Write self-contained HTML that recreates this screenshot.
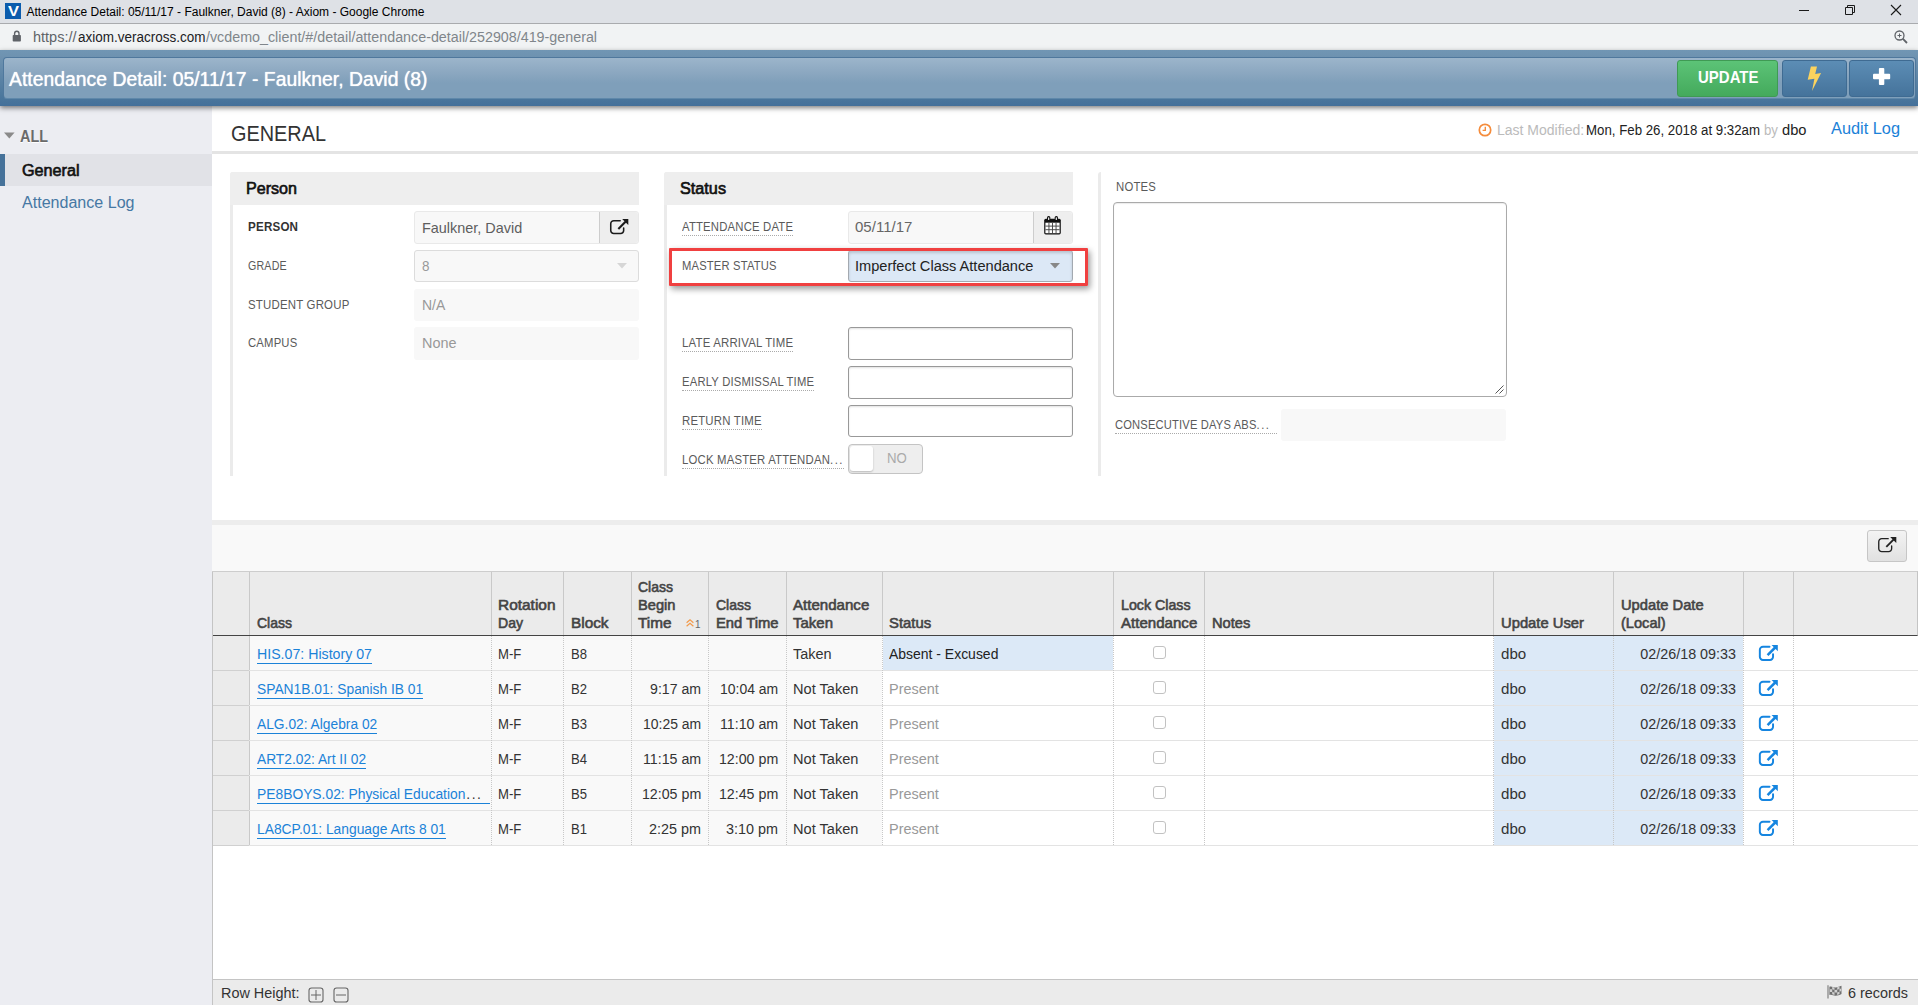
<!DOCTYPE html>
<html lang="en"><head><meta charset="utf-8"><title>Attendance Detail: 05/11/17 - Faulkner, David (8) - Axiom</title>
<style>
*{box-sizing:border-box;margin:0;padding:0}
html,body{width:1918px;height:1005px;overflow:hidden;background:#fff}
body{position:relative;font-family:"Liberation Sans",sans-serif;font-size:14px;color:#333}
.a{position:absolute}
.t{position:absolute;white-space:nowrap;line-height:20px;display:inline-block}
svg{position:absolute;overflow:visible}
.inp{position:absolute;height:32px;background:#f8f8f8;border-radius:3px}
.winp{position:absolute;height:32px;background:#fff;border:1px solid #999;border-radius:3px}
.vl{position:absolute;width:0;border-left:1px dotted #c8c8c8}
.hl{position:absolute;height:1px;background:#e6e6e6}
.hsep{position:absolute;width:1px;background:#c9c9c9}
.cb{position:absolute;width:13px;height:13px;border:1px solid #c2c2c2;border-radius:3px;background:#fff}
.du{border-bottom:1px dotted #aaa}
</style></head><body>
<div class="a" style="left:0;top:0;width:1918px;height:24px;background:#dee1e6;border-bottom:1px solid #a9abae"></div>
<div class="a" style="left:5px;top:3px;width:16px;height:16px;background:#0b5cad"></div>
<span class="t" style="top:1.00px;font-size:14.00px;color:#fff;font-weight:700;left:7.60px;transform:scaleX(1.1773);transform-origin:0 50%;">V</span>
<span class="t" style="top:2.00px;font-size:12.00px;color:#000;left:26.50px;">Attendance Detail: 05/11/17 - Faulkner, David (8) - Axiom - Google Chrome</span>
<svg style="left:1790px;top:0" width="128" height="24" viewBox="0 0 128 24"><g fill="none" stroke="#1a1a1a" stroke-width="1"><path d="M9 10.5h10"/><path d="M55.5 7.5h7v7h-7z" /><path d="M57.5 7.5v-2h7v7h-2"/><path d="M101 5l10 10M111 5l-10 10" stroke-width="1.1"/></g></svg>
<div class="a" style="left:0;top:24px;width:1918px;height:26px;background:#f1f3f4"></div>
<svg style="left:12px;top:30px" width="10" height="12" viewBox="0 0 10 12"><rect x="0.7" y="5" width="8.2" height="6.6" rx="0.8" fill="#5f6368"/><path d="M2.6 5V3.4a2.2 2.2 0 0 1 4.4 0V5" fill="none" stroke="#5f6368" stroke-width="1.4"/></svg>
<span class="t" style="top:27.00px;font-size:14.00px;color:#5f6368;left:33.20px;transform:scaleX(1.0349);transform-origin:0 50%;">https://</span>
<span class="t" style="top:27.00px;font-size:14.00px;color:#202124;left:78.30px;transform:scaleX(0.9640);transform-origin:0 50%;">axiom.veracross.com</span>
<span class="t" style="top:27.00px;font-size:14.00px;color:#80868b;left:206.30px;transform:scaleX(1.0211);transform-origin:0 50%;">/vcdemo_client/#/detail/attendance-detail/252908/419-general</span>
<svg style="left:1894.2px;top:30.3px" width="14" height="14" viewBox="0 0 14 14"><g fill="none" stroke="#5f6368" stroke-width="1.3"><circle cx="5.5" cy="5.5" r="4.5"/><path d="M8.7 8.7l4.3 4.3" stroke-width="1.8"/><path d="M3.5 5.5h4M5.5 3.5v4" stroke-width="1"/></g></svg>
<div class="a" style="left:0;top:0;width:1918px;height:0;z-index:3">
<div class="a" style="left:0;top:50px;width:1918px;height:56px;background:linear-gradient(#7196b4,#6e92b0 12%,#4a769c 86%,#44709a);box-shadow:0 2px 5px rgba(0,0,0,.5)"></div>
<div class="a" style="left:3px;top:57px;width:1913px;height:42px;border-radius:4px;background:linear-gradient(#9cb5cb,#8ba7c0 38%,#7f9fba 62%,#7f9fba);border:1px solid #4f789d;border-bottom-color:#5f88aa"></div>
<span class="t" style="top:69.00px;font-size:19.60px;color:#fff;left:8.80px;transform:scaleX(0.9886);transform-origin:0 50%;text-shadow:0 0 1px #fff;">Attendance Detail: 05/11/17 - Faulkner, David (8)</span>
<div class="a" style="left:1677px;top:60px;width:101px;height:37px;border-radius:3px;background:linear-gradient(#5cc377,#44aa5c);border:1px solid #3f9a54"></div>
<span class="t" style="top:67.00px;font-size:16.20px;color:#fff;font-weight:700;left:1697.50px;transform:scaleX(0.9257);transform-origin:0 50%;">UPDATE</span>
<div class="a" style="left:1782px;top:60px;width:65px;height:37px;border-radius:3px;background:linear-gradient(#5c8db5,#45739b);border:1px solid #3f6b92"></div>
<div class="a" style="left:1849px;top:60px;width:65px;height:37px;border-radius:3px;background:linear-gradient(#5c8db5,#45739b);border:1px solid #3f6b92"></div>
<svg style="left:1806px;top:66px" width="16" height="26" viewBox="0 0 16 26"><path d="M4.900 0.600L11 0.600L9.200 8L15.100 7.100L6 25.100L8.400 12.800L1.700 13.700Z" fill="#fbd35e"/></svg>
<svg style="left:1872.9px;top:68.1px" width="17.2" height="17" viewBox="0 0 17.2 17"><rect x="5.900" y="0" width="5.400" height="17" rx="1" fill="#fff"/><rect x="0" y="5.800" width="17.200" height="5.400" rx="1" fill="#fff"/></svg>
</div>
<div class="a" style="left:0;top:106px;width:212px;height:899px;background:#ecedf2"></div>
<svg style="left:4px;top:132px" width="11" height="7" viewBox="0 0 11 7"><path d="M0 0.4h10.6L5.3 6.6z" fill="#8a8a8a"/></svg>
<span class="t" style="top:127.00px;font-size:15.60px;color:#6a6a6a;font-weight:700;left:20.00px;transform:scaleX(0.9237);transform-origin:0 50%;text-shadow:0 1px 0 #fff;">ALL</span>
<div class="a" style="left:0;top:154px;width:212px;height:32px;background:#e1e2e7;border-left:5px solid #46729a"></div>
<span class="t" style="top:161.00px;font-size:15.80px;color:#111;-webkit-text-stroke:0.63px #111;left:22.00px;transform:scaleX(1.0231);transform-origin:0 50%;">General</span>
<span class="t" style="top:193.00px;font-size:15.80px;color:#4678a4;left:22.00px;transform:scaleX(1.0165);transform-origin:0 50%;">Attendance Log</span>
<span class="t" style="top:124.00px;font-size:22.30px;color:#333;left:231.00px;transform:scaleX(0.8914);transform-origin:0 50%;">GENERAL</span>
<div class="a" style="left:212px;top:151px;width:1706px;height:3px;background:#e4e4e4"></div>
<svg style="left:1477.6px;top:122.9px" width="14" height="14" viewBox="0 0 14 14"><circle cx="7" cy="7" r="5.7" fill="none" stroke="#f58c3c" stroke-width="1.7"/><path d="M7.3 3.8v3.6H4.6" fill="none" stroke="#f58c3c" stroke-width="1.4"/></svg>
<span class="t" style="top:121.00px;font-size:13.80px;color:#bbb;left:1496.70px;transform:scaleX(1.0151);transform-origin:0 50%;">Last Modified:</span>
<span class="t" style="top:121.00px;font-size:13.80px;color:#222;left:1586.00px;transform:scaleX(0.9612);transform-origin:0 50%;">Mon, Feb 26, 2018 at 9:32am</span>
<span class="t" style="top:121.00px;font-size:13.80px;color:#bbb;left:1763.50px;transform:scaleX(0.9603);transform-origin:0 50%;">by</span>
<span class="t" style="top:121.00px;font-size:13.80px;color:#222;left:1781.50px;transform:scaleX(1.0638);transform-origin:0 50%;">dbo</span>
<span class="t" style="top:119.00px;font-size:16.60px;color:#1b82d8;left:1831.00px;transform:scaleX(0.9840);transform-origin:0 50%;">Audit Log</span>
<div class="a" style="left:230px;top:172px;width:3px;height:304px;background:#ebebeb;border-radius:3px 0 0 0"></div>
<div class="a" style="left:230px;top:172px;width:409px;height:33px;background:#eee;border-radius:3px 0 0 0"></div>
<span class="t" style="top:179.00px;font-size:15.80px;color:#111;-webkit-text-stroke:0.63px #111;left:245.50px;transform:scaleX(1.0187);transform-origin:0 50%;">Person</span>
<div class="a" style="left:664px;top:172px;width:3px;height:304px;background:#ebebeb;border-radius:3px 0 0 0"></div>
<div class="a" style="left:664px;top:172px;width:409px;height:33px;background:#eee;border-radius:3px 0 0 0"></div>
<span class="t" style="top:179.00px;font-size:15.80px;color:#111;-webkit-text-stroke:0.63px #111;left:679.50px;transform:scaleX(1.0269);transform-origin:0 50%;">Status</span>
<div class="a" style="left:1098px;top:172px;width:3px;height:304px;background:#ebebeb;border-radius:3px 0 0 0"></div>
<span class="t" style="top:217.00px;font-size:12.20px;color:#333;font-weight:700;left:248.20px;transform:scaleX(0.9531);transform-origin:0 50%;letter-spacing:0.2px;">PERSON</span>
<span class="t" style="top:256.00px;font-size:12.20px;color:#5a5a5a;left:248.20px;transform:scaleX(0.8750);transform-origin:0 50%;letter-spacing:0.2px;">GRADE</span>
<span class="t" style="top:295.00px;font-size:12.20px;color:#5a5a5a;left:248.20px;transform:scaleX(0.9397);transform-origin:0 50%;letter-spacing:0.2px;">STUDENT GROUP</span>
<span class="t" style="top:333.00px;font-size:12.20px;color:#5a5a5a;left:248.20px;transform:scaleX(0.9261);transform-origin:0 50%;letter-spacing:0.2px;">CAMPUS</span>
<div class="inp" style="left:414px;top:211px;width:225px;height:33px;border:1px solid #e9e9e9"></div>
<div class="a" style="left:599px;top:212px;width:39px;height:31px;background:#eee;border-left:1px solid #cdcdcd;border-radius:0 3px 3px 0"></div>
<svg style="left:609.8px;top:218.8px" width="19.0" height="16.0" viewBox="0 0 19 16"><path d="M10.2 1.65H3.75a3 3 0 0 0-3 3V11.55a3 3 0 0 0 3 3H10.65a3 3 0 0 0 3-3V8.9" fill="none" stroke="#1a1a1a" stroke-width="1.55" stroke-linecap="round"/><path d="M8.3 9.9L16 2.2" fill="none" stroke="#1a1a1a" stroke-width="2.10"/><path d="M12.2 0H18.3V6.1z" fill="#1a1a1a"/></svg>
<span class="t" style="top:218.00px;font-size:14.60px;color:#5e5e5e;left:421.90px;transform:scaleX(0.9881);transform-origin:0 50%;">Faulkner, David</span>
<div class="inp" style="left:414px;top:250px;width:225px;border:1px solid #dcdcdc"></div>
<span class="t" style="top:256.00px;font-size:14.60px;color:#999;left:421.90px;transform:scaleX(0.9231);transform-origin:0 50%;">8</span>
<svg style="left:616.7px;top:263px" width="10" height="6" viewBox="0 0 10 6"><path d="M0 0h10L5 5.4z" fill="#d6d6d6"/></svg>
<div class="inp" style="left:414px;top:289px;width:225px"></div>
<span class="t" style="top:295.00px;font-size:14.60px;color:#999;left:421.70px;transform:scaleX(0.9577);transform-origin:0 50%;">N/A</span>
<div class="inp" style="left:414px;top:327px;width:225px;height:33px"></div>
<span class="t" style="top:333.00px;font-size:14.60px;color:#999;left:421.90px;transform:scaleX(0.9888);transform-origin:0 50%;">None</span>
<div class="a" style="left:681.8px;top:235.0px;width:111.2px;height:0;border-top:1px dotted #aaa"></div>
<span class="t" style="top:217.00px;font-size:12.20px;color:#5a5a5a;left:681.80px;transform:scaleX(0.9290);transform-origin:0 50%;letter-spacing:0.2px;">ATTENDANCE DATE</span>
<span class="t" style="top:256.00px;font-size:12.20px;color:#5a5a5a;left:681.80px;transform:scaleX(0.9190);transform-origin:0 50%;letter-spacing:0.2px;">MASTER STATUS</span>
<div class="a" style="left:681.8px;top:351.0px;width:111.2px;height:0;border-top:1px dotted #aaa"></div>
<span class="t" style="top:333.00px;font-size:12.20px;color:#5a5a5a;left:681.80px;transform:scaleX(0.9363);transform-origin:0 50%;letter-spacing:0.2px;">LATE ARRIVAL TIME</span>
<div class="a" style="left:681.8px;top:390.0px;width:132.2px;height:0;border-top:1px dotted #aaa"></div>
<span class="t" style="top:372.00px;font-size:12.20px;color:#5a5a5a;left:681.80px;transform:scaleX(0.9240);transform-origin:0 50%;letter-spacing:0.2px;">EARLY DISMISSAL TIME</span>
<div class="a" style="left:681.8px;top:429.0px;width:79.8px;height:0;border-top:1px dotted #aaa"></div>
<span class="t" style="top:411.00px;font-size:12.20px;color:#5a5a5a;left:681.80px;transform:scaleX(0.9359);transform-origin:0 50%;letter-spacing:0.2px;">RETURN TIME</span>
<div class="a" style="left:681.8px;top:468.0px;width:162.0px;height:0;border-top:1px dotted #aaa"></div>
<span class="t" style="top:450.00px;font-size:12.20px;color:#5a5a5a;left:681.80px;transform:scaleX(0.9320);transform-origin:0 50%;letter-spacing:0.2px;">LOCK MASTER ATTENDAN<span style="letter-spacing:1.6px">...</span></span>
<div class="inp" style="left:848px;top:211px;width:225px;height:33px;border:1px solid #e9e9e9"></div>
<div class="a" style="left:1033px;top:212px;width:39px;height:31px;background:#eee;border-left:1px solid #cdcdcd;border-radius:0 3px 3px 0"></div>
<span class="t" style="top:217.00px;font-size:14.60px;color:#666;left:855.30px;transform:scaleX(1.0317);transform-origin:0 50%;">05/11/17</span>
<svg style="left:1044.4px;top:216.3px" width="17" height="18.6" viewBox="0 0 17 18.6"><rect x="0.2" y="2.7" width="16.6" height="15.7" rx="1.6" fill="#111"/><rect x="1.4" y="6.7" width="14.2" height="10.5" fill="#fff"/><path d="M4.95 6.7v10.5M8.5 6.700v10.5M12.050 6.700v10.5M1.400 10.100h14.2M1.400 13.700h14.2" stroke="#444" stroke-width=".95" fill="none"/><rect x="3" y="0.100" width="3.300" height="5" rx="1.500" fill="#111"/><rect x="10.700" y="0.100" width="3.300" height="5" rx="1.500" fill="#111"/><rect x="4" y="1.200" width="1.300" height="2.900" rx=".600" fill="#ddd"/><rect x="11.700" y="1.200" width="1.300" height="2.900" rx=".600" fill="#ddd"/></svg>
<div class="a" style="left:848px;top:250px;width:225px;height:32px;background:#dce8f6;border:1px solid #a3a9b0;border-radius:3px;box-shadow:inset 0 2px 3px rgba(0,0,0,.16)"></div>
<div class="a" style="left:669px;top:248px;width:419px;height:38px;border:3px solid #f04040;border-radius:1px;box-shadow:2px 3px 6px rgba(0,0,0,.4)"></div>
<span class="t" style="top:256.00px;font-size:15.10px;color:#222;left:855.30px;transform:scaleX(0.9665);transform-origin:0 50%;">Imperfect Class Attendance</span>
<svg style="left:1050.4px;top:263px" width="10" height="6" viewBox="0 0 10 6"><path d="M0 0h10L5 5.4z" fill="#888"/></svg>
<div class="winp" style="left:848px;top:327px;width:225px;height:33px;box-shadow:inset 0 1px 2px rgba(0,0,0,.12)"></div>
<div class="winp" style="left:848px;top:366px;width:225px;height:33px;box-shadow:inset 0 1px 2px rgba(0,0,0,.12)"></div>
<div class="winp" style="left:848px;top:405px;width:225px;height:32px;box-shadow:inset 0 1px 2px rgba(0,0,0,.12)"></div>
<div class="a" style="left:848px;top:444px;width:75px;height:30px;background:#eee;border:1px solid #c4c4c4;border-radius:4px"></div>
<div class="a" style="left:850px;top:446px;width:23px;height:25px;background:#fff;border-radius:3px;box-shadow:0 1px 2px rgba(0,0,0,.22)"></div>
<span class="t" style="top:448.00px;font-size:14.40px;color:#aaa;left:887.30px;transform:scaleX(0.9169);transform-origin:0 50%;">NO</span>
<span class="t" style="top:177.00px;font-size:12.20px;color:#5a5a5a;left:1115.50px;transform:scaleX(0.9306);transform-origin:0 50%;letter-spacing:0.2px;">NOTES</span>
<div class="a" style="left:1113px;top:202px;width:394px;height:195px;background:#fff;border:1px solid #aaa;border-radius:4px;box-shadow:inset 0 1px 1px rgba(0,0,0,.08)"></div>
<svg style="left:1495px;top:385px" width="9" height="9" viewBox="0 0 9 9"><path d="M0.5 8.5l8-8M4.5 8.5l4-4" stroke="#555" stroke-width="1" fill="none"/></svg>
<div class="a" style="left:1115.3px;top:433.0px;width:162.0px;height:0;border-top:1px dotted #aaa"></div>
<span class="t" style="top:415.00px;font-size:12.20px;color:#5a5a5a;left:1115.30px;transform:scaleX(0.9147);transform-origin:0 50%;letter-spacing:0.2px;">CONSECUTIVE DAYS ABS<span style="letter-spacing:1.6px">...</span></span>
<div class="inp" style="left:1281px;top:409px;width:225px"></div>
<div class="a" style="left:212px;top:520px;width:1706px;height:5px;background:#ededed"></div>
<div class="a" style="left:212px;top:525px;width:1706px;height:47px;background:#f9f9f9"></div>
<div class="a" style="left:1867px;top:530px;width:40px;height:32px;background:linear-gradient(#f3f3f3,#e1e1e1);border:1px solid #c6c6c6;border-radius:3px"></div>
<svg style="left:1877.6px;top:537.4px" width="19.0" height="16.0" viewBox="0 0 19 16"><path d="M10.2 1.65H3.75a3 3 0 0 0-3 3V11.55a3 3 0 0 0 3 3H10.65a3 3 0 0 0 3-3V8.9" fill="none" stroke="#222" stroke-width="1.35" stroke-linecap="round"/><path d="M8.3 9.9L16 2.2" fill="none" stroke="#222" stroke-width="1.90"/><path d="M12.2 0H18.3V6.1z" fill="#222"/></svg>
<div class="a" style="left:212px;top:571px;width:1706px;height:65px;background:#ebebeb;border-top:1px solid #cdcdcd;border-bottom:1px solid #444;border-right:1px solid #c4c4c4"></div>
<div class="hsep" style="left:249px;top:572px;height:63px"></div>
<div class="hsep" style="left:491px;top:572px;height:63px"></div>
<div class="hsep" style="left:563px;top:572px;height:63px"></div>
<div class="hsep" style="left:631px;top:572px;height:63px"></div>
<div class="hsep" style="left:708px;top:572px;height:63px"></div>
<div class="hsep" style="left:786px;top:572px;height:63px"></div>
<div class="hsep" style="left:882px;top:572px;height:63px"></div>
<div class="hsep" style="left:1113px;top:572px;height:63px"></div>
<div class="hsep" style="left:1204px;top:572px;height:63px"></div>
<div class="hsep" style="left:1493px;top:572px;height:63px"></div>
<div class="hsep" style="left:1613px;top:572px;height:63px"></div>
<div class="hsep" style="left:1743px;top:572px;height:63px"></div>
<div class="hsep" style="left:1793px;top:572px;height:63px"></div>
<div class="a" style="left:212px;top:636px;width:38px;height:210px;background:#ebebeb;border-right:1px solid #c9c9c9"></div>
<div class="a" style="left:250px;top:636px;width:632px;height:209px;background:#f9f9f9"></div>
<div class="a" style="left:883px;top:636px;width:230px;height:34px;background:#dce9f7"></div>
<div class="a" style="left:1494px;top:636px;width:249px;height:209px;background:#dce9f7"></div>
<div class="hl" style="left:212px;top:670px;width:1706px;background:#e3e3e3"></div>
<div class="hl" style="left:212px;top:705px;width:1706px;background:#e3e3e3"></div>
<div class="hl" style="left:212px;top:740px;width:1706px;background:#e3e3e3"></div>
<div class="hl" style="left:212px;top:775px;width:1706px;background:#e3e3e3"></div>
<div class="hl" style="left:212px;top:810px;width:1706px;background:#e3e3e3"></div>
<div class="hl" style="left:212px;top:845px;width:1706px;background:#e3e3e3"></div>
<div class="hl" style="left:213px;top:670px;width:36px;background:#d0d0d0"></div>
<div class="hl" style="left:213px;top:705px;width:36px;background:#d0d0d0"></div>
<div class="hl" style="left:213px;top:740px;width:36px;background:#d0d0d0"></div>
<div class="hl" style="left:213px;top:775px;width:36px;background:#d0d0d0"></div>
<div class="hl" style="left:213px;top:810px;width:36px;background:#d0d0d0"></div>
<div class="hl" style="left:213px;top:845px;width:36px;background:#d0d0d0"></div>
<div class="vl" style="left:491px;top:636px;height:209px"></div>
<div class="vl" style="left:563px;top:636px;height:209px"></div>
<div class="vl" style="left:631px;top:636px;height:209px"></div>
<div class="vl" style="left:708px;top:636px;height:209px"></div>
<div class="vl" style="left:786px;top:636px;height:209px"></div>
<div class="vl" style="left:882px;top:636px;height:209px"></div>
<div class="vl" style="left:1113px;top:636px;height:209px"></div>
<div class="vl" style="left:1204px;top:636px;height:209px"></div>
<div class="vl" style="left:1493px;top:636px;height:209px"></div>
<div class="vl" style="left:1613px;top:636px;height:209px"></div>
<div class="vl" style="left:1743px;top:636px;height:209px"></div>
<div class="vl" style="left:1793px;top:636px;height:209px"></div>
<div class="a" style="left:212px;top:572px;width:1px;height:433px;background:#c4c4c4"></div>
<span class="t" style="top:613.00px;font-size:14.40px;color:#444;-webkit-text-stroke:0.58px #444;left:256.90px;transform:scaleX(0.9726);transform-origin:0 50%;">Class</span>
<span class="t" style="top:595.00px;font-size:14.40px;color:#444;-webkit-text-stroke:0.58px #444;left:498.20px;transform:scaleX(1.0726);transform-origin:0 50%;">Rotation</span>
<span class="t" style="top:613.00px;font-size:14.40px;color:#444;-webkit-text-stroke:0.58px #444;left:498.20px;transform:scaleX(0.9768);transform-origin:0 50%;">Day</span>
<span class="t" style="top:613.00px;font-size:14.40px;color:#444;-webkit-text-stroke:0.58px #444;left:571.00px;transform:scaleX(1.0652);transform-origin:0 50%;">Block</span>
<span class="t" style="top:577.00px;font-size:14.40px;color:#444;-webkit-text-stroke:0.58px #444;left:638.20px;transform:scaleX(0.9726);transform-origin:0 50%;">Class</span>
<span class="t" style="top:595.00px;font-size:14.40px;color:#444;-webkit-text-stroke:0.58px #444;left:638.20px;transform:scaleX(1.0187);transform-origin:0 50%;">Begin</span>
<span class="t" style="top:613.00px;font-size:14.40px;color:#444;-webkit-text-stroke:0.58px #444;left:638.20px;transform:scaleX(1.0651);transform-origin:0 50%;">Time</span>
<span class="t" style="top:595.00px;font-size:14.40px;color:#444;-webkit-text-stroke:0.58px #444;left:715.60px;transform:scaleX(0.9726);transform-origin:0 50%;">Class</span>
<span class="t" style="top:613.00px;font-size:14.40px;color:#444;-webkit-text-stroke:0.58px #444;left:715.60px;transform:scaleX(1.0280);transform-origin:0 50%;">End Time</span>
<span class="t" style="top:595.00px;font-size:14.40px;color:#444;-webkit-text-stroke:0.58px #444;left:792.90px;transform:scaleX(1.0479);transform-origin:0 50%;">Attendance</span>
<span class="t" style="top:613.00px;font-size:14.40px;color:#444;-webkit-text-stroke:0.58px #444;left:792.90px;transform:scaleX(1.0415);transform-origin:0 50%;">Taken</span>
<span class="t" style="top:613.00px;font-size:14.40px;color:#444;-webkit-text-stroke:0.58px #444;left:889.30px;transform:scaleX(1.0340);transform-origin:0 50%;">Status</span>
<span class="t" style="top:595.00px;font-size:14.40px;color:#444;-webkit-text-stroke:0.58px #444;left:1120.50px;transform:scaleX(0.9873);transform-origin:0 50%;">Lock Class</span>
<span class="t" style="top:613.00px;font-size:14.40px;color:#444;-webkit-text-stroke:0.58px #444;left:1120.50px;transform:scaleX(1.0479);transform-origin:0 50%;">Attendance</span>
<span class="t" style="top:613.00px;font-size:14.40px;color:#444;-webkit-text-stroke:0.58px #444;left:1211.80px;transform:scaleX(1.0188);transform-origin:0 50%;">Notes</span>
<span class="t" style="top:613.00px;font-size:14.40px;color:#444;-webkit-text-stroke:0.58px #444;left:1500.80px;transform:scaleX(1.0273);transform-origin:0 50%;">Update User</span>
<span class="t" style="top:595.00px;font-size:14.40px;color:#444;-webkit-text-stroke:0.58px #444;left:1621.00px;transform:scaleX(1.0221);transform-origin:0 50%;">Update Date</span>
<span class="t" style="top:613.00px;font-size:14.40px;color:#444;-webkit-text-stroke:0.58px #444;left:1621.00px;transform:scaleX(1.0136);transform-origin:0 50%;">(Local)</span>
<svg style="left:686px;top:618.5px" width="8" height="8" viewBox="0 0 8 8"><path d="M0.6 3.8L4 0.8l3.4 3M0.6 7.2L4 4.2l3.4 3" fill="none" stroke="#f29b4c" stroke-width="1.2"/></svg>
<span class="t" style="top:614.00px;font-size:11.00px;color:#666;left:694.50px;transform:scaleX(0.8980);transform-origin:0 50%;">1</span>
<span class="t" style="top:644.00px;font-size:14.70px;color:#1b82d8;left:256.90px;transform:scaleX(0.9649);transform-origin:0 50%;">HIS.07: History 07</span>
<div class="a" style="left:256.9px;top:662.6px;width:115.0px;height:1px;background:#1b82d8"></div>
<span class="t" style="top:644.00px;font-size:14.70px;color:#333;left:498.20px;transform:scaleX(0.8924);transform-origin:0 50%;">M-F</span>
<span class="t" style="top:644.00px;font-size:14.70px;color:#333;left:571.00px;transform:scaleX(0.8904);transform-origin:0 50%;">B8</span>
<span class="t" style="top:644.00px;font-size:14.70px;color:#333;left:792.90px;transform:scaleX(0.9846);transform-origin:0 50%;">Taken</span>
<span class="t" style="top:644.00px;font-size:14.70px;color:#222;left:889.30px;transform:scaleX(0.9503);transform-origin:0 50%;">Absent - Excused</span>
<div class="cb" style="left:1152.5px;top:646.0px"></div>
<span class="t" style="top:644.00px;font-size:14.70px;color:#333;left:1500.80px;transform:scaleX(1.0279);transform-origin:0 50%;">dbo</span>
<span class="t" style="top:644.00px;font-size:14.70px;color:#333;right:181.80px;transform:scaleX(0.9764);transform-origin:100% 50%;">02/26/18 09:33</span>
<svg style="left:1758.8px;top:645.0px" width="19.6" height="16.4" viewBox="0 0 19 16"><path d="M10.2 1.65H3.75a3 3 0 0 0-3 3V11.55a3 3 0 0 0 3 3H10.65a3 3 0 0 0 3-3V8.9" fill="none" stroke="#1585e0" stroke-width="1.90" stroke-linecap="round"/><path d="M8.3 9.9L16 2.2" fill="none" stroke="#1585e0" stroke-width="2.45"/><path d="M12.2 0H18.3V6.1z" fill="#1585e0"/></svg>
<span class="t" style="top:679.00px;font-size:14.70px;color:#1b82d8;left:256.90px;transform:scaleX(0.9395);transform-origin:0 50%;">SPAN1B.01: Spanish IB 01</span>
<div class="a" style="left:256.9px;top:697.6px;width:166.2px;height:1px;background:#1b82d8"></div>
<span class="t" style="top:679.00px;font-size:14.70px;color:#333;left:498.20px;transform:scaleX(0.8924);transform-origin:0 50%;">M-F</span>
<span class="t" style="top:679.00px;font-size:14.70px;color:#333;left:571.00px;transform:scaleX(0.8904);transform-origin:0 50%;">B2</span>
<span class="t" style="top:679.00px;font-size:14.70px;color:#333;right:1217.00px;transform:scaleX(0.9608);transform-origin:100% 50%;">9:17 am</span>
<span class="t" style="top:679.00px;font-size:14.70px;color:#333;right:1139.50px;transform:scaleX(0.9502);transform-origin:100% 50%;">10:04 am</span>
<span class="t" style="top:679.00px;font-size:14.70px;color:#333;left:792.90px;transform:scaleX(0.9928);transform-origin:0 50%;">Not Taken</span>
<span class="t" style="top:679.00px;font-size:14.70px;color:#999;left:889.30px;transform:scaleX(0.9837);transform-origin:0 50%;">Present</span>
<div class="cb" style="left:1152.5px;top:681.0px"></div>
<span class="t" style="top:679.00px;font-size:14.70px;color:#333;left:1500.80px;transform:scaleX(1.0279);transform-origin:0 50%;">dbo</span>
<span class="t" style="top:679.00px;font-size:14.70px;color:#333;right:181.80px;transform:scaleX(0.9764);transform-origin:100% 50%;">02/26/18 09:33</span>
<svg style="left:1758.8px;top:680.0px" width="19.6" height="16.4" viewBox="0 0 19 16"><path d="M10.2 1.65H3.75a3 3 0 0 0-3 3V11.55a3 3 0 0 0 3 3H10.65a3 3 0 0 0 3-3V8.9" fill="none" stroke="#1585e0" stroke-width="1.90" stroke-linecap="round"/><path d="M8.3 9.9L16 2.2" fill="none" stroke="#1585e0" stroke-width="2.45"/><path d="M12.2 0H18.3V6.1z" fill="#1585e0"/></svg>
<span class="t" style="top:714.00px;font-size:14.70px;color:#1b82d8;left:256.90px;transform:scaleX(0.9376);transform-origin:0 50%;">ALG.02: Algebra 02</span>
<div class="a" style="left:256.9px;top:732.6px;width:120.2px;height:1px;background:#1b82d8"></div>
<span class="t" style="top:714.00px;font-size:14.70px;color:#333;left:498.20px;transform:scaleX(0.8924);transform-origin:0 50%;">M-F</span>
<span class="t" style="top:714.00px;font-size:14.70px;color:#333;left:571.00px;transform:scaleX(0.8904);transform-origin:0 50%;">B3</span>
<span class="t" style="top:714.00px;font-size:14.70px;color:#333;right:1217.00px;transform:scaleX(0.9502);transform-origin:100% 50%;">10:25 am</span>
<span class="t" style="top:714.00px;font-size:14.70px;color:#333;right:1139.50px;transform:scaleX(0.9675);transform-origin:100% 50%;">11:10 am</span>
<span class="t" style="top:714.00px;font-size:14.70px;color:#333;left:792.90px;transform:scaleX(0.9928);transform-origin:0 50%;">Not Taken</span>
<span class="t" style="top:714.00px;font-size:14.70px;color:#999;left:889.30px;transform:scaleX(0.9837);transform-origin:0 50%;">Present</span>
<div class="cb" style="left:1152.5px;top:716.0px"></div>
<span class="t" style="top:714.00px;font-size:14.70px;color:#333;left:1500.80px;transform:scaleX(1.0279);transform-origin:0 50%;">dbo</span>
<span class="t" style="top:714.00px;font-size:14.70px;color:#333;right:181.80px;transform:scaleX(0.9764);transform-origin:100% 50%;">02/26/18 09:33</span>
<svg style="left:1758.8px;top:715.0px" width="19.6" height="16.4" viewBox="0 0 19 16"><path d="M10.2 1.65H3.75a3 3 0 0 0-3 3V11.55a3 3 0 0 0 3 3H10.65a3 3 0 0 0 3-3V8.9" fill="none" stroke="#1585e0" stroke-width="1.90" stroke-linecap="round"/><path d="M8.3 9.9L16 2.2" fill="none" stroke="#1585e0" stroke-width="2.45"/><path d="M12.2 0H18.3V6.1z" fill="#1585e0"/></svg>
<span class="t" style="top:749.00px;font-size:14.70px;color:#1b82d8;left:256.90px;transform:scaleX(0.9366);transform-origin:0 50%;">ART2.02: Art II 02</span>
<div class="a" style="left:256.9px;top:767.6px;width:109.1px;height:1px;background:#1b82d8"></div>
<span class="t" style="top:749.00px;font-size:14.70px;color:#333;left:498.20px;transform:scaleX(0.8924);transform-origin:0 50%;">M-F</span>
<span class="t" style="top:749.00px;font-size:14.70px;color:#333;left:571.00px;transform:scaleX(0.8904);transform-origin:0 50%;">B4</span>
<span class="t" style="top:749.00px;font-size:14.70px;color:#333;right:1217.00px;transform:scaleX(0.9675);transform-origin:100% 50%;">11:15 am</span>
<span class="t" style="top:749.00px;font-size:14.70px;color:#333;right:1139.50px;transform:scaleX(0.9682);transform-origin:100% 50%;">12:00 pm</span>
<span class="t" style="top:749.00px;font-size:14.70px;color:#333;left:792.90px;transform:scaleX(0.9928);transform-origin:0 50%;">Not Taken</span>
<span class="t" style="top:749.00px;font-size:14.70px;color:#999;left:889.30px;transform:scaleX(0.9837);transform-origin:0 50%;">Present</span>
<div class="cb" style="left:1152.5px;top:751.0px"></div>
<span class="t" style="top:749.00px;font-size:14.70px;color:#333;left:1500.80px;transform:scaleX(1.0279);transform-origin:0 50%;">dbo</span>
<span class="t" style="top:749.00px;font-size:14.70px;color:#333;right:181.80px;transform:scaleX(0.9764);transform-origin:100% 50%;">02/26/18 09:33</span>
<svg style="left:1758.8px;top:750.0px" width="19.6" height="16.4" viewBox="0 0 19 16"><path d="M10.2 1.65H3.75a3 3 0 0 0-3 3V11.55a3 3 0 0 0 3 3H10.65a3 3 0 0 0 3-3V8.9" fill="none" stroke="#1585e0" stroke-width="1.90" stroke-linecap="round"/><path d="M8.3 9.9L16 2.2" fill="none" stroke="#1585e0" stroke-width="2.45"/><path d="M12.2 0H18.3V6.1z" fill="#1585e0"/></svg>
<span class="t" style="top:784.00px;font-size:14.70px;color:#1b82d8;left:256.90px;transform:scaleX(0.9419);transform-origin:0 50%;">PE8BOYS.02: Physical Education<span style="color:#333;letter-spacing:1.6px;margin-left:1px">...</span></span>
<div class="a" style="left:256.9px;top:802.6px;width:232.7px;height:1px;background:#1b82d8"></div>
<span class="t" style="top:784.00px;font-size:14.70px;color:#333;left:498.20px;transform:scaleX(0.8924);transform-origin:0 50%;">M-F</span>
<span class="t" style="top:784.00px;font-size:14.70px;color:#333;left:571.00px;transform:scaleX(0.8904);transform-origin:0 50%;">B5</span>
<span class="t" style="top:784.00px;font-size:14.70px;color:#333;right:1217.00px;transform:scaleX(0.9682);transform-origin:100% 50%;">12:05 pm</span>
<span class="t" style="top:784.00px;font-size:14.70px;color:#333;right:1139.50px;transform:scaleX(0.9682);transform-origin:100% 50%;">12:45 pm</span>
<span class="t" style="top:784.00px;font-size:14.70px;color:#333;left:792.90px;transform:scaleX(0.9928);transform-origin:0 50%;">Not Taken</span>
<span class="t" style="top:784.00px;font-size:14.70px;color:#999;left:889.30px;transform:scaleX(0.9837);transform-origin:0 50%;">Present</span>
<div class="cb" style="left:1152.5px;top:786.0px"></div>
<span class="t" style="top:784.00px;font-size:14.70px;color:#333;left:1500.80px;transform:scaleX(1.0279);transform-origin:0 50%;">dbo</span>
<span class="t" style="top:784.00px;font-size:14.70px;color:#333;right:181.80px;transform:scaleX(0.9764);transform-origin:100% 50%;">02/26/18 09:33</span>
<svg style="left:1758.8px;top:785.0px" width="19.6" height="16.4" viewBox="0 0 19 16"><path d="M10.2 1.65H3.75a3 3 0 0 0-3 3V11.55a3 3 0 0 0 3 3H10.65a3 3 0 0 0 3-3V8.9" fill="none" stroke="#1585e0" stroke-width="1.90" stroke-linecap="round"/><path d="M8.3 9.9L16 2.2" fill="none" stroke="#1585e0" stroke-width="2.45"/><path d="M12.2 0H18.3V6.1z" fill="#1585e0"/></svg>
<span class="t" style="top:819.00px;font-size:14.70px;color:#1b82d8;left:256.90px;transform:scaleX(0.9411);transform-origin:0 50%;">LA8CP.01: Language Arts 8 01</span>
<div class="a" style="left:256.9px;top:837.6px;width:188.8px;height:1px;background:#1b82d8"></div>
<span class="t" style="top:819.00px;font-size:14.70px;color:#333;left:498.20px;transform:scaleX(0.8924);transform-origin:0 50%;">M-F</span>
<span class="t" style="top:819.00px;font-size:14.70px;color:#333;left:571.00px;transform:scaleX(0.8904);transform-origin:0 50%;">B1</span>
<span class="t" style="top:819.00px;font-size:14.70px;color:#333;right:1217.00px;transform:scaleX(0.9797);transform-origin:100% 50%;">2:25 pm</span>
<span class="t" style="top:819.00px;font-size:14.70px;color:#333;right:1139.50px;transform:scaleX(0.9797);transform-origin:100% 50%;">3:10 pm</span>
<span class="t" style="top:819.00px;font-size:14.70px;color:#333;left:792.90px;transform:scaleX(0.9928);transform-origin:0 50%;">Not Taken</span>
<span class="t" style="top:819.00px;font-size:14.70px;color:#999;left:889.30px;transform:scaleX(0.9837);transform-origin:0 50%;">Present</span>
<div class="cb" style="left:1152.5px;top:821.0px"></div>
<span class="t" style="top:819.00px;font-size:14.70px;color:#333;left:1500.80px;transform:scaleX(1.0279);transform-origin:0 50%;">dbo</span>
<span class="t" style="top:819.00px;font-size:14.70px;color:#333;right:181.80px;transform:scaleX(0.9764);transform-origin:100% 50%;">02/26/18 09:33</span>
<svg style="left:1758.8px;top:820.0px" width="19.6" height="16.4" viewBox="0 0 19 16"><path d="M10.2 1.65H3.75a3 3 0 0 0-3 3V11.55a3 3 0 0 0 3 3H10.65a3 3 0 0 0 3-3V8.9" fill="none" stroke="#1585e0" stroke-width="1.90" stroke-linecap="round"/><path d="M8.3 9.9L16 2.2" fill="none" stroke="#1585e0" stroke-width="2.45"/><path d="M12.2 0H18.3V6.1z" fill="#1585e0"/></svg>
<div class="a" style="left:213px;top:979px;width:1705px;height:26px;background:#ebebeb;border-top:1px solid #c4c4c4"></div>
<span class="t" style="top:983.00px;font-size:14.60px;color:#333;left:220.70px;transform:scaleX(0.9887);transform-origin:0 50%;">Row Height:</span>
<svg style="left:308.3px;top:986.7px" width="16" height="16" viewBox="0 0 16 16"><rect x="1" y="1" width="14" height="14" rx="2.6" fill="none" stroke="#666" stroke-width="1.1"/><path d="M3 8h10M8 3v10" stroke="#666" stroke-width="1"/></svg>
<svg style="left:332.7px;top:986.7px" width="16" height="16" viewBox="0 0 16 16"><rect x="1" y="1" width="14" height="14" rx="2.6" fill="none" stroke="#666" stroke-width="1.1"/><path d="M3 8h10" stroke="#666" stroke-width="1"/></svg>
<svg style="left:1827.3px;top:985.2px" width="16" height="14" viewBox="0 0 16 14"><path d="M1 0.2v13.3" stroke="#777" stroke-width="1.1"/><path d="M2.4 1.8c2.2-1 4 .9 6.300 .7 2-.1 3.700-.9 5.800-1.700v8.200c-2 .9-3.800 1.600-5.800 1.700-2.300 .2-4.100-1.700-6.300-.7z" fill="#707070"/><path d="M5.200 1.900l2.300 .6v2.400l-2.300-.6zM10.200 2.300l2.300-.7v2.500l-2.300 .7zM2.900 4.300l2.300 0v2.600l-2.300 .2zM7.500 4.900l2.700-.1v2.700l-2.700 .1zM5.200 6.900l2.300 .7v2.300l-2.300-.7zM10.200 7.500l2.300-.7v2.300l-2.300 .8zM12.500 4.100l1.700-.7v2.600l-1.700 .8z" fill="#d2d2d2"/></svg>
<span class="t" style="top:983.00px;font-size:14.60px;color:#333;left:1848.00px;transform:scaleX(0.9861);transform-origin:0 50%;">6 records</span>
</body></html>
